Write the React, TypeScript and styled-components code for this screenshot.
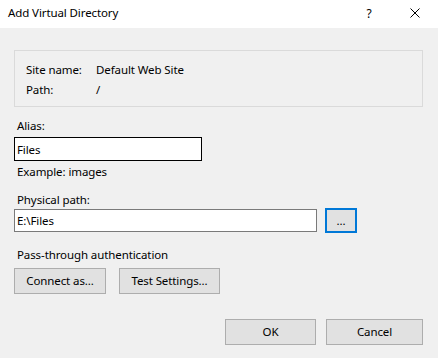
import React from "react";
import styled, { createGlobalStyle } from "styled-components";

const Global = createGlobalStyle`
  html, body { margin: 0; padding: 0; background: #f0f0f0; }
  body { font-family: "Noto Sans", "Open Sans", sans-serif; font-size: 11.5px; letter-spacing: -0.1px; color: #000; }
  * { box-sizing: border-box; }
`;

const Dialog = styled.div`
  width: 438px;
  height: 358px;
  background: #f0f0f0;
  display: flex;
  flex-direction: column;
`;

const TitleBar = styled.div`
  height: 28px;
  background: #fff;
  display: flex;
  align-items: center;
  padding-left: 8px;
  flex-shrink: 0;
`;

const TitleText = styled.div`
  flex: 1;
  line-height: 16px;
  margin-top: -2px;
`;

const TitleButton = styled.div<{ $w: number }>`
  width: ${(p) => p.$w}px;
  height: 28px;
  display: flex;
  align-items: center;
  justify-content: center;
  margin-top: -2px;
  font-size: 12px;
`;

const Body = styled.div`
  padding: 22px 15px 0 14px;
  display: flex;
  flex-direction: column;
`;

const InfoBox = styled.div`
  height: 57px;
  border: 1px solid #dadada;
  padding: 11px 0 0 11px;
  display: grid;
  grid-template-columns: 70px 1fr;
  grid-auto-rows: 20px;
  align-content: start;
  line-height: 16px;
`;

const Label = styled.div<{ $mt: number }>`
  margin-top: ${(p) => p.$mt}px;
  padding-left: 3px;
  line-height: 16px;
  height: 16px;
`;

const Input = styled.div<{ $w: number; $h: number; $border: string }>`
  width: ${(p) => p.$w}px;
  height: ${(p) => p.$h}px;
  border: 1px solid ${(p) => p.$border};
  background: #fff;
  display: flex;
  align-items: center;
  padding-left: 2px;
`;

const Row = styled.div<{ $mt: number; $gap: number }>`
  display: flex;
  align-items: center;
  gap: ${(p) => p.$gap}px;
  margin-top: ${(p) => p.$mt}px;
`;

const Button = styled.div<{ $w: number; $h?: number; $focus?: boolean }>`
  width: ${(p) => p.$w}px;
  height: ${(p) => p.$h ?? 26}px;
  background: #e1e1e1;
  border: ${(p) => (p.$focus ? "2px solid #0078d7" : "1px solid #adadad")};
  display: flex;
  align-items: center;
  justify-content: center;
  line-height: 16px;
`;

const Footer = styled.div`
  display: flex;
  justify-content: flex-end;
  gap: 10px;
  margin-top: 25px;
`;

export default function App() {
  return (
    <>
      <Global />
      <Dialog>
        <TitleBar>
          <TitleText>Add Virtual Directory</TitleText>
          <TitleButton $w={46}>?</TitleButton>
          <TitleButton $w={46}>
            <svg width="10" height="10" viewBox="0 0 10 10">
              <path d="M0.5 0.5 L9.5 9.5 M9.5 0.5 L0.5 9.5" stroke="#000" strokeWidth="1" />
            </svg>
          </TitleButton>
        </TitleBar>
        <Body>
          <InfoBox>
            <span>Site name:</span>
            <span>Default Web Site</span>
            <span>Path:</span>
            <span>/</span>
          </InfoBox>
          <Label $mt={11}>Alias:</Label>
          <Row $mt={3} $gap={0}>
            <Input $w={188} $h={24} $border="#000">Files</Input>
          </Row>
          <Label $mt={3}>Example: images</Label>
          <Label $mt={12}>Physical path:</Label>
          <Row $mt={0} $gap={8}>
            <Input $w={303} $h={23} $border="#7a7a7a">E:\Files</Input>
            <Button $w={32} $h={25} $focus>...</Button>
          </Row>
          <Label $mt={14}>Pass-through authentication</Label>
          <Row $mt={5} $gap={13}>
            <Button $w={92}>Connect as...</Button>
            <Button $w={101}>Test Settings...</Button>
          </Row>
          <Footer>
            <Button $w={91}>OK</Button>
            <Button $w={97}>Cancel</Button>
          </Footer>
        </Body>
      </Dialog>
    </>
  );
}
